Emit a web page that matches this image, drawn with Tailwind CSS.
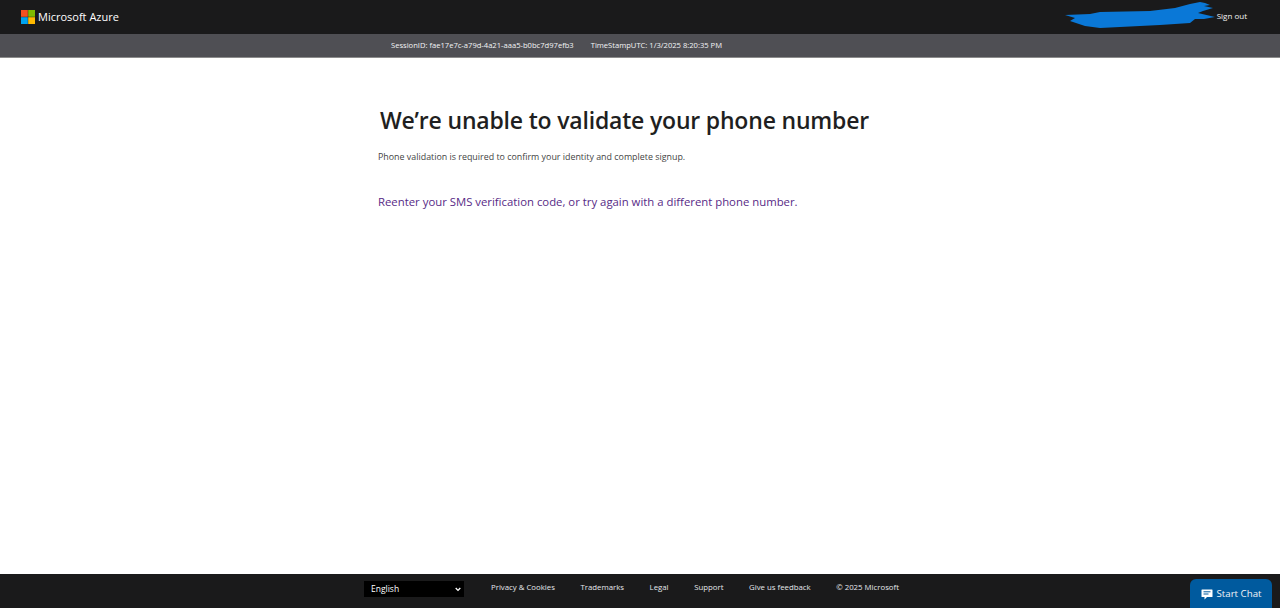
<!DOCTYPE html>
<html lang="en">
<head>
  <meta charset="UTF-8" />
  <meta name="viewport" content="width=device-width, initial-scale=1" />
  <title>Microsoft Azure</title>
  <script src="https://cdn.jsdelivr.net/npm/@tailwindcss/browser@4"></script>
</head>
<body class="relative h-[608px] overflow-hidden bg-white font-['Open_Sans',sans-serif] flex flex-col">
  <!-- top bar -->
  <header class="h-[34px] bg-[#1a1a1b] flex items-center justify-between pl-[21px] pr-[33px]">
    <div class="flex items-center gap-[3px]">
      <svg width="14" height="14" viewBox="0 0 14 14" class="shrink-0">
        <rect width="6.8" height="6.8" fill="#f25022" />
        <rect x="7.2" width="6.8" height="6.8" fill="#7fba00" />
        <rect y="7.2" width="6.8" height="6.8" fill="#00a4ef" />
        <rect x="7.2" y="7.2" width="6.8" height="6.8" fill="#ffb900" />
      </svg>
      <span class="text-[11px] font-medium text-white">Microsoft Azure</span>
    </div>
    <a class="mb-[2px] text-[8px] text-gray-100">Sign out</a>
  </header>
  <!-- redacted account name -->
  <svg class="absolute left-[1064px] top-0" width="152" height="30" viewBox="1064 0 152 30">
    <path d="M1065 15 L1090 14 L1100 12 L1150 11 L1175 8 L1190 4 L1200 2 L1205 3 L1210 5 L1204 6 L1213 8 L1203 11 L1198 13 L1215 17 L1204 19 L1195 19 L1190 23 L1160 25 L1120 27 L1100 28 L1085 26 L1070 21 L1075 18 Z" fill="#0a78d7" />
  </svg>
  <!-- session info -->
  <div class="h-[24px] pt-[1px] bg-[#4f4f54] flex items-center pl-[391px] gap-[17px] text-[7.6px] text-gray-100 border-b border-[#8c8c8c]">
    <span>SessionID: fae17e7c-a79d-4a21-aaa5-b0bc7d97efb3</span>
    <span>TimeStampUTC: 1/3/2025 8:20:35 PM</span>
  </div>
  <!-- message -->
  <main class="flex-1 pl-[378px]">
    <h1 class="mt-[45px] ml-[2px] text-[23px] tracking-[-0.19px] leading-[34px] font-semibold text-[#1f1f21]">We’re unable to validate your phone number</h1>
    <p class="mt-[13px] text-[8.9px] leading-[14px] text-[#444]">Phone validation is required to confirm your identity and complete signup.</p>
    <a class="block mt-[29px] text-[11.35px] leading-[18px] text-[#572a86]">Reenter your SMS verification code, or try again with a different phone number.</a>
  </main>
  <!-- footer -->
  <footer class="h-[34px] bg-[#1a1a1b] flex items-start pl-[364px] text-[7.8px] text-gray-200">
    <div class="relative mt-[7px] w-[100px] h-[16px]">
      <select class="appearance-none w-full h-full bg-black text-white text-[8.5px] pl-[7px]">
        <option>English</option>
      </select>
      <svg class="absolute right-[3px] top-[6px]" width="6" height="5" viewBox="0 0 6 5">
        <path d="M.7 1 L3 3.4 L5.3 1" fill="none" stroke="#fff" stroke-width="1.3" />
      </svg>
    </div>
    <nav class="flex gap-[25.6px] ml-[27px] mt-[7px] leading-[12px]">
      <a>Privacy &amp; Cookies</a>
      <a>Trademarks</a>
      <a>Legal</a>
      <a>Support</a>
      <a>Give us feedback</a>
      <span>© 2025 Microsoft</span>
    </nav>
  </footer>
  <!-- floating chat button -->
  <button class="absolute right-[8px] bottom-0 w-[82px] h-[29px] pt-[1px] bg-[#005a9e] rounded-t-[6px] flex items-center justify-center gap-[4px] text-[9.7px] text-gray-100">
    <svg width="12" height="12" viewBox="0 0 12 12" class="shrink-0">
      <path d="M1 1.5 H11 A.5 .5 0 0 1 11.5 2 V8.5 A.5 .5 0 0 1 11 9 H6 L3.5 11.5 V9 H1 A.5 .5 0 0 1 .5 8.5 V2 A.5 .5 0 0 1 1 1.5 Z" fill="#fff" />
      <path d="M2.5 3.8 H9.5 M2.5 6 H7.5" stroke="#005a9e" stroke-width="1" />
    </svg>
    Start Chat
  </button>
</body>
</html>
